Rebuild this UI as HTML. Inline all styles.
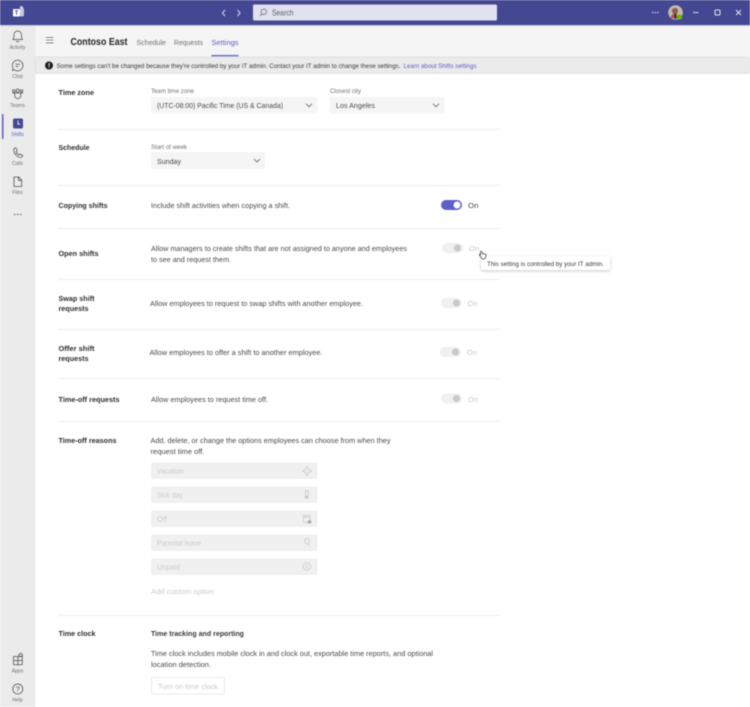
<!DOCTYPE html>
<html lang="en"><head><meta charset="utf-8"><title>Shifts settings</title>
<style>
html,body{margin:0;padding:0;background:#fff;width:750px;height:707px;overflow:hidden}
svg{display:block;filter:blur(.4px)}
text{font-family:"Liberation Sans",Arial,sans-serif;font-size:7.6px;fill:#4a4a4a}
.b{font-weight:bold;fill:#2e2e2e;font-size:7.6px}
.s{font-size:6px;fill:#707070}
.n{font-size:5px;fill:#707070;text-anchor:middle}
.d{fill:#cacaca}
.i{fill:none;stroke:#4a4a4a;stroke-width:.75}
.h{fill:none;stroke:#c4c4c4;stroke-width:.7}
.l{stroke:#ededed;stroke-width:1}
</style></head><body>
<svg width="750" height="707" viewBox="0 0 750 707" xmlns="http://www.w3.org/2000/svg">
<defs><filter id="sh" x="-10%" y="-50%" width="120%" height="200%"><feGaussianBlur stdDeviation="1.500"/></filter></defs>
<rect width="750" height="707" fill="#fff"/>
<!-- title bar -->
<rect width="750" height="25" fill="#444791"/>
<rect y="25" width="750" height="1" fill="#c9cadf"/>
<rect x="13" y="9" width="7" height="7.500" rx=".7" fill="#fff"/>
<rect x="20" y="8" width="4" height="8.500" rx="1.500" fill="#c5c6e6"/>
<circle cx="21.500" cy="7.500" r="1.500" fill="#d8d9ee"/>
<path d="M15 10.800h3M16.500 10.800v4" stroke="#444791" stroke-width=".9"/>
<path d="M225 10l-2.600 3 2.600 3M237.500 10l2.600 3-2.600 3" fill="none" stroke="#d9daf0" stroke-width="1"/>
<rect x="253" y="4.500" width="244" height="16" rx="1.500" fill="#e1e1ef"/>
<circle cx="263.800" cy="11.800" r="2.700" fill="none" stroke="#616161" stroke-width=".7"/>
<path d="M262 13.800l-2 2.200" stroke="#616161" stroke-width=".7"/>
<text x="272" y="15.700" textLength="21.500" lengthAdjust="spacingAndGlyphs" style="font-size:7.800px;fill:#616161">Search</text>
<path d="M652 12.500h1.500M654.500 12.500h1.500M657 12.500h1.500" stroke="#e6e6f2" stroke-width="1"/>
<circle cx="675.500" cy="12.500" r="7.300" fill="#c2bdb0"/>
<circle cx="675" cy="11" r="3.100" fill="#8f5a48"/>
<path d="M670.500 18c1-3.500 3-4.500 4.500-4.500 1.500 0 2 2 2.500 5z" fill="#b04a4a"/>
<rect x="674.500" y="13.500" width="1.800" height="5.500" fill="#333"/>
<circle cx="679.500" cy="17" r="2.700" fill="#6bb700"/>
<path d="M693 12.500h5.500" stroke="#d9daf0" stroke-width="1"/>
<rect x="715" y="10" width="5" height="5" rx="1" fill="none" stroke="#e6e6f2" stroke-width="1"/>
<path d="M736 10l5 5M741 10l-5 5" stroke="#e6e6f2" stroke-width=".9"/>
<!-- sidebar -->
<rect y="26" width="35.500" height="681" fill="#ebebeb"/>
<!-- activity -->
<path class="i" d="M13 39.500c.8-1 .9-2.500.9-4.700a3.800 3.800 0 0 1 7.600 0c0 2.200.1 3.700.9 4.700zM16 41.500h3.400"/>
<text class="n" x="17.500" y="49">Activity</text>
<!-- chat -->
<path class="i" d="M17.700 60.200a5.300 5.300 0 1 1-3 9.700l-2.200.6.600-2.200a5.300 5.300 0 0 1 4.600-8.100z"/>
<path class="i" d="M15.500 64.300h4.500M15.500 66.500h3"/>
<text class="n" x="17.500" y="78">Chat</text>
<!-- teams -->
<circle class="i" cx="17.700" cy="90.500" r="1.500"/><circle class="i" cx="13.800" cy="91" r="1.200"/><circle class="i" cx="21.600" cy="91" r="1.200"/>
<path class="i" d="M14.800 93h5.900v2.700a2.950 2.950 0 0 1-5.900 0zM12.300 93h2.500v3M23.100 93h-2.400v3"/>
<text class="n" x="17.500" y="107">Teams</text>
<!-- shifts -->
<rect x="2" y="114" width="1.500" height="25" rx=".7" fill="#5b5fc7"/>
<rect x="13" y="118.500" width="10" height="10" rx="1.500" fill="#444791"/>
<path d="M18 120.500v3.700h2.200" fill="none" stroke="#fff" stroke-width=".8"/>
<text class="n" x="17.500" y="136" style="fill:#5b5fc7">Shifts</text>
<!-- calls -->
<path class="i" d="M14 148.500l1.800-.8 1.500 2.800-1.200 1.200c.6 1.500 1.700 2.600 3 3.300l1.200-1 2.400 1.500-.7 1.400c-1 1.100-3 .8-5-.9-3-2.500-3.800-5.500-3-7.500z"/>
<text class="n" x="17.500" y="165">Calls</text>
<!-- files -->
<path class="i" d="M14 177h4.700l3 3.200v6.300H14zM18.500 177v3.500h3.200"/>
<text class="n" x="17.500" y="194">Files</text>
<path d="M14 214.500h1.400M17 214.500h1.400M20 214.500h1.400" stroke="#4a4a4a" stroke-width="1.100"/>
<!-- apps -->
<path class="i" d="M13.500 656.500h8.800v7.500a.8.800 0 0 1-.8.800h-7.200a.8.800 0 0 1-.8-.8zM13.500 660.500h8.800M17.900 656.500v8.300"/>
<rect class="i" x="19.300" y="653.600" width="2.800" height="2.800" transform="rotate(45 20.700 655)" fill="#ebebeb" style="fill:#ebebeb"/>
<text class="n" x="17.500" y="672.500">Apps</text>
<!-- help -->
<circle class="i" cx="17.800" cy="689" r="5"/>
<text x="17.800" y="691.600" text-anchor="middle" style="font-size:7px;fill:#4a4a4a">?</text>
<text class="n" x="17.500" y="701.500">Help</text>
<!-- header -->
<rect x="35.500" y="26" width="714.500" height="31" fill="#f5f5f5"/>
<path d="M46 37.500h7.500M46 40.200h7.500M46 42.900h7.500" stroke="#616161" stroke-width=".7"/>
<text x="70.500" y="45" textLength="57" lengthAdjust="spacingAndGlyphs" class="b" style="font-size:9.800px;fill:#242424">Contoso East</text>
<text x="136.500" y="45" textLength="29.500" lengthAdjust="spacingAndGlyphs" style="fill:#707070">Schedule</text>
<text x="174" y="45" textLength="29" lengthAdjust="spacingAndGlyphs" style="fill:#707070">Requests</text>
<text x="211.500" y="45" textLength="27" lengthAdjust="spacingAndGlyphs" style="fill:#5b5fc7">Settings</text>
<rect x="211.500" y="55" width="27" height="1.300" fill="#5b5fc7"/>
<!-- banner -->
<rect x="35.500" y="57" width="714" height="16.500" rx="1.500" fill="#ebebeb" stroke="#dcdcdc" stroke-width=".7"/>
<circle cx="49" cy="65.500" r="4" fill="#1f1f1f"/>
<rect x="48.600" y="63" width=".9" height="3.200" fill="#fff"/><rect x="48.600" y="66.800" width=".9" height=".9" fill="#fff"/>
<text x="56.500" y="68" textLength="344" lengthAdjust="spacingAndGlyphs" style="font-size:6.700px;fill:#3a3a3a">Some settings can't be changed because they're controlled by your IT admin. Contact your IT admin to change these settings.</text>
<text x="403.500" y="68" textLength="73" lengthAdjust="spacingAndGlyphs" style="font-size:6.700px;fill:#5b5fc7">Learn about Shifts settings</text>
<!-- dividers -->
<path class="l" d="M58 129.500h442M58 185.500h442M58 228.500h442M58 279.500h442M58 329.500h442M58 378.500h442M58 421.500h442M58 615.500h442"/>
<!-- time zone -->
<text class="b" x="58.500" y="95" textLength="35.500" lengthAdjust="spacingAndGlyphs">Time zone</text>
<text class="s" x="151" y="93" textLength="43" lengthAdjust="spacingAndGlyphs">Team time zone</text>
<text class="s" x="330" y="93" textLength="31" lengthAdjust="spacingAndGlyphs">Closest city</text>
<rect x="151" y="97" width="166.500" height="16.500" rx="1.500" fill="#f5f5f5"/>
<rect x="330" y="97" width="114.500" height="16.500" rx="1.500" fill="#f5f5f5"/>
<text x="157" y="108" textLength="126" lengthAdjust="spacingAndGlyphs">(UTC-08:00) Pacific Time (US &amp; Canada)</text>
<text x="336" y="108" textLength="39" lengthAdjust="spacingAndGlyphs">Los Angeles</text>
<!-- schedule -->
<text class="b" x="58.500" y="150" textLength="31" lengthAdjust="spacingAndGlyphs">Schedule</text>
<text class="s" x="151" y="149" textLength="36" lengthAdjust="spacingAndGlyphs">Start of week</text>
<rect x="151" y="152" width="114" height="17" rx="1.500" fill="#f5f5f5"/>
<text x="157" y="164" textLength="24" lengthAdjust="spacingAndGlyphs">Sunday</text>
<path d="M306 103.700l3 3 3-3M433 103.700l3 3 3-3M254 159l3 3 3-3" fill="none" stroke="#4a4a4a" stroke-width=".7"/>
<!-- copying -->
<text class="b" x="58.500" y="208" textLength="49" lengthAdjust="spacingAndGlyphs">Copying shifts</text>
<text x="151" y="208" textLength="139" lengthAdjust="spacingAndGlyphs">Include shift activities when copying a shift.</text>
<rect x="441" y="200" width="21" height="10" rx="5" fill="#5b5fc7"/>
<circle cx="457" cy="205" r="3.500" fill="#fff"/>
<text x="468" y="208" textLength="10.500" lengthAdjust="spacingAndGlyphs">On</text>
<!-- open shifts -->
<text class="b" x="58.500" y="256" textLength="40" lengthAdjust="spacingAndGlyphs">Open shifts</text>
<text x="151" y="251" textLength="256" lengthAdjust="spacingAndGlyphs">Allow managers to create shifts that are not assigned to anyone and employees</text>
<text x="151" y="262" textLength="80" lengthAdjust="spacingAndGlyphs">to see and request them.</text>
<rect x="442" y="243" width="21" height="10" rx="5" fill="#f0f0f0"/><circle cx="457.500" cy="248" r="3.500" fill="#c8c8c8"/>
<text class="d" x="469" y="251" textLength="10.500" lengthAdjust="spacingAndGlyphs">On</text>
<!-- swap -->
<text class="b" x="58.500" y="301" textLength="36" lengthAdjust="spacingAndGlyphs">Swap shift</text>
<text class="b" x="58.500" y="311" textLength="30" lengthAdjust="spacingAndGlyphs">requests</text>
<text x="150" y="306" textLength="213" lengthAdjust="spacingAndGlyphs">Allow employees to request to swap shifts with another employee.</text>
<rect x="441" y="298" width="21" height="10" rx="5" fill="#f0f0f0"/><circle cx="456.500" cy="303" r="3.500" fill="#c8c8c8"/>
<text class="d" x="467.500" y="306" textLength="10" lengthAdjust="spacingAndGlyphs">On</text>
<!-- offer -->
<text class="b" x="58.500" y="351" textLength="36" lengthAdjust="spacingAndGlyphs">Offer shift</text>
<text class="b" x="58.500" y="361" textLength="30" lengthAdjust="spacingAndGlyphs">requests</text>
<text x="149.500" y="355" textLength="173" lengthAdjust="spacingAndGlyphs">Allow employees to offer a shift to another employee.</text>
<rect x="440" y="347" width="21" height="10" rx="5" fill="#f0f0f0"/><circle cx="455.500" cy="352" r="3.500" fill="#c8c8c8"/>
<text class="d" x="467" y="355" textLength="10" lengthAdjust="spacingAndGlyphs">On</text>
<!-- time off -->
<text class="b" x="58.500" y="402" textLength="61" lengthAdjust="spacingAndGlyphs">Time-off requests</text>
<text x="151" y="402" textLength="117" lengthAdjust="spacingAndGlyphs">Allow employees to request time off.</text>
<rect x="441" y="393.500" width="21" height="10" rx="5" fill="#f0f0f0"/><circle cx="456.500" cy="398.500" r="3.500" fill="#c8c8c8"/>
<text class="d" x="468" y="402" textLength="10" lengthAdjust="spacingAndGlyphs">On</text>
<!-- reasons -->
<text class="b" x="58.500" y="443" textLength="58" lengthAdjust="spacingAndGlyphs">Time-off reasons</text>
<text x="150.500" y="443" textLength="240" lengthAdjust="spacingAndGlyphs">Add, delete, or change the options employees can choose from when they</text>
<text x="150.500" y="454" textLength="54" lengthAdjust="spacingAndGlyphs">request time off.</text>
<g fill="#f0f0f0">
<rect x="151" y="462.500" width="166.500" height="16.500" rx="1.500"/>
<rect x="151" y="486.500" width="166.500" height="16.500" rx="1.500"/>
<rect x="151" y="510.500" width="166.500" height="16.500" rx="1.500"/>
<rect x="151" y="534.500" width="166.500" height="16.500" rx="1.500"/>
<rect x="151" y="558.500" width="166.500" height="16.500" rx="1.500"/>
</g>
<text class="d" x="157" y="473.500" textLength="27" lengthAdjust="spacingAndGlyphs">Vacation</text>
<text class="d" x="157" y="497.500" textLength="26" lengthAdjust="spacingAndGlyphs">Sick day</text>
<text class="d" x="157" y="521.500" textLength="10" lengthAdjust="spacingAndGlyphs">Off</text>
<text class="d" x="157" y="545.500" textLength="44" lengthAdjust="spacingAndGlyphs">Parental leave</text>
<text class="d" x="157" y="569.500" textLength="23" lengthAdjust="spacingAndGlyphs">Unpaid</text>
<path class="h" d="M307 466.500c1 0 1.200 1.500 1.200 3l3.300 1.500-3.300 1.500c0 1.500-.2 3-1.200 3s-1.200-1.500-1.200-3l-3.300-1.500 3.300-1.500c0-1.500.2-3 1.200-3z"/>
<rect class="h" x="305.300" y="490.500" width="2.800" height="7.800" rx="1.400"/><circle cx="306.700" cy="497" r="1.300" fill="#c4c4c4"/>
<path class="h" d="M310 521v-5.500h-6.500v7h5M303.500 517h6.500"/><circle cx="309.500" cy="521.800" r="1.800" fill="#a8a8a8"/>
<path class="h" d="M308 538.500c1.500 1 1.800 3 .7 4.500-1 1.200-2.700 1.300-3.500.2-1-1.200-.5-3.200.5-4.200.6-.6 1.500-.8 2.300-.5zM308 544l1.500 2"/>
<circle class="h" cx="307" cy="566.500" r="3.800"/><path class="h" d="M305.500 565.500h3M305.500 567.800h3"/>
<text class="d" x="151" y="594" textLength="63" lengthAdjust="spacingAndGlyphs" style="font-size:7.400px">Add custom option</text>
<!-- time clock -->
<text class="b" x="58.500" y="636" textLength="37" lengthAdjust="spacingAndGlyphs">Time clock</text>
<text x="151" y="636" textLength="93" lengthAdjust="spacingAndGlyphs" style="font-weight:bold;fill:#3a3a3a">Time tracking and reporting</text>
<text x="151" y="656" textLength="282" lengthAdjust="spacingAndGlyphs">Time clock includes mobile clock in and clock out, exportable time reports, and optional</text>
<text x="151" y="667" textLength="60" lengthAdjust="spacingAndGlyphs">location detection.</text>
<rect x="151.500" y="677.500" width="73" height="16.500" rx="1.500" fill="#fff" stroke="#e6e6e6" stroke-width=".8"/>
<text class="d" x="158" y="689" textLength="60" lengthAdjust="spacingAndGlyphs">Turn on time clock</text>
<!-- tooltip -->
<rect x="481" y="257" width="129" height="14" rx="1.500" fill="#000" opacity=".22" filter="url(#sh)"/>
<rect x="481" y="256" width="129" height="14" rx="1.500" fill="#fff"/>
<text x="487" y="266" textLength="117" lengthAdjust="spacingAndGlyphs" style="font-size:6.600px;fill:#3a3a3a">This setting is controlled by your IT admin.</text>
<!-- cursor -->
<path d="M480.500 251.500c.6-.5 1.300 0 1.500.7l.8 1.800c.8-.4 3-.2 3.200 1 .2 1-.3 2.800-1.300 3.800-1.500.6-2.500.2-3-.7l-2.300-3c-.3-.7.400-1.200 1.300-.5z" fill="#fff" stroke="#333" stroke-width=".7"/>
</svg>
</body></html>
